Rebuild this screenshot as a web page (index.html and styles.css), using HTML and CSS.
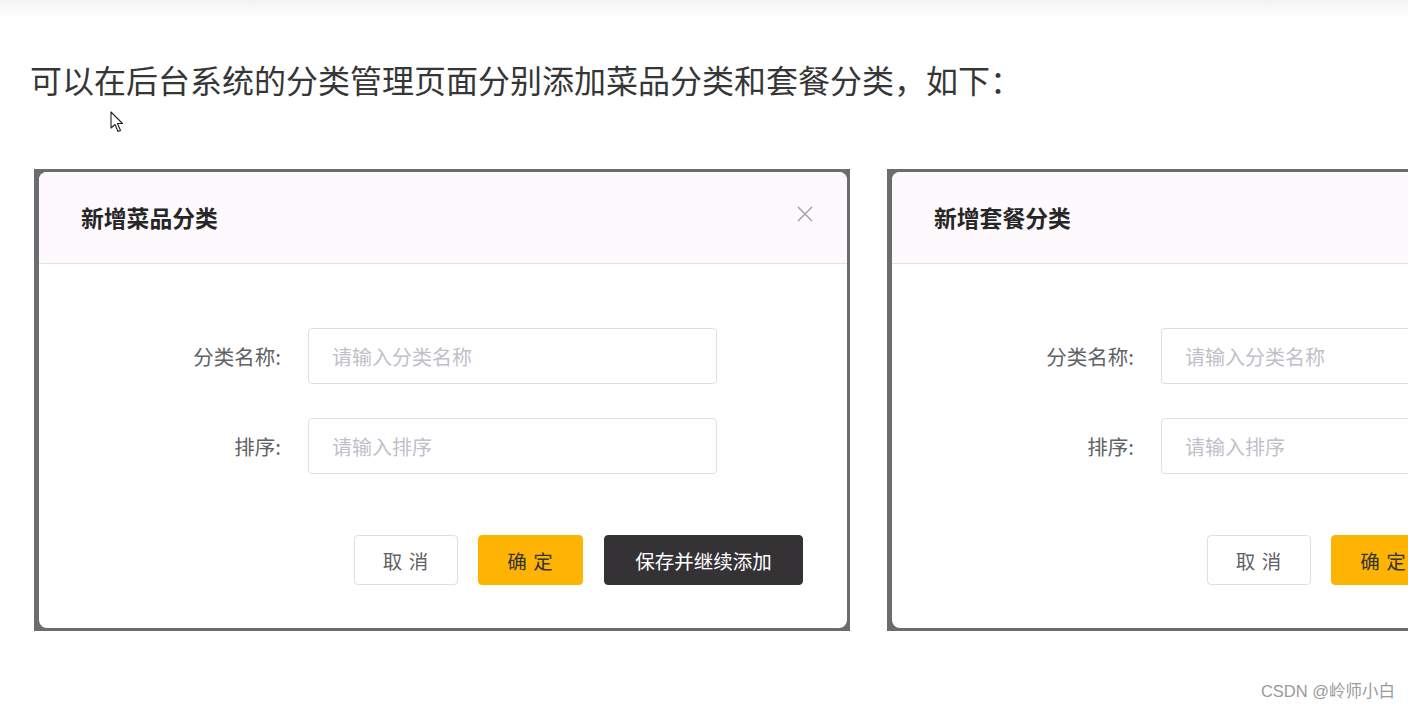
FILE: index.html
```html
<!DOCTYPE html>
<html lang="zh-CN">
<head>
<meta charset="utf-8">
<title>分类管理</title>
<link rel="stylesheet" href="styles.css">
</head>
<body>
<div class="page">
  <div class="topfade"></div>
  <p class="intro">可以在后台系统的分类管理页面分别添加菜品分类和套餐分类，如下：</p>
  <div class="shots">
    <div class="frame">
      <div class="dialog">
        <div class="dialog-header">
          <span class="dialog-title">新增菜品分类</span>
          <svg class="close" width="16" height="16" viewBox="0 0 16 16"><path d="M1 1L15 15M15 1L1 15" stroke="#9a9ca3" stroke-width="1.4" fill="none"/></svg>
        </div>
        <div class="dialog-body">
          <div class="form-row">
            <label class="form-label">分类名称:</label>
            <div class="input">请输入分类名称</div>
          </div>
          <div class="form-row form-row-last">
            <label class="form-label">排序:</label>
            <div class="input">请输入排序</div>
          </div>
          <div class="footer">
            <button class="btn btn-plain">取 消</button>
            <button class="btn btn-yellow">确 定</button>
            <button class="btn btn-dark">保存并继续添加</button>
          </div>
        </div>
      </div>
    </div>
    <div class="frame">
      <div class="dialog">
        <div class="dialog-header">
          <span class="dialog-title">新增套餐分类</span>
          <svg class="close" width="16" height="16" viewBox="0 0 16 16"><path d="M1 1L15 15M15 1L1 15" stroke="#9a9ca3" stroke-width="1.4" fill="none"/></svg>
        </div>
        <div class="dialog-body">
          <div class="form-row">
            <label class="form-label">分类名称:</label>
            <div class="input">请输入分类名称</div>
          </div>
          <div class="form-row form-row-last">
            <label class="form-label">排序:</label>
            <div class="input">请输入排序</div>
          </div>
          <div class="footer">
            <button class="btn btn-plain">取 消</button>
            <button class="btn btn-yellow">确 定</button>
            <button class="btn btn-dark">保存并继续添加</button>
          </div>
        </div>
      </div>
    </div>
  </div>
  <svg class="cursor" width="14" height="22" viewBox="0 0 14 22"><path d="M1 1L1 17L5 13.5L8 20.5L10.5 19.5L7.5 12.5L12.5 12.5Z" fill="#fff" stroke="#222" stroke-width="1.1" stroke-linejoin="round"/></svg>
  <div class="watermark">CSDN @岭师小白</div>
</div>
</body>
</html>
```
FILE: styles.css
```css
html, body {
  margin: 0;
  padding: 0;
  background: #ffffff;
}
body {
  width: 1408px;
  height: 709px;
  overflow: hidden;
  font-family: "Noto Sans CJK SC", "Noto Sans", "Liberation Sans", sans-serif;
}
.page {
  position: relative;
  width: 1408px;
  height: 709px;
  overflow: hidden;
}
.topfade {
  height: 18px;
  background: linear-gradient(#f3f3f4, #ffffff);
}
.intro {
  margin: 40px 0 0 30px;
  height: 43px;
  line-height: 43px;
  font-size: 32px;
  color: #363636;
  white-space: nowrap;
}
.shots {
  display: flex;
  gap: 37px;
  margin: 68px 0 0 34px;
}
.frame {
  flex-shrink: 0;
  background: #6c6c6e;
  padding: 3px 3px 3px 5px;
}
.dialog {
  width: 808px;
  height: 456px;
  background: #ffffff;
  border-radius: 8px;
  overflow: hidden;
  position: relative;
}
.dialog-header {
  height: 92px;
  background: #fdf9fd;
  border-bottom: 1px solid #e4e2e8;
  display: flex;
  align-items: center;
  padding: 0 0 0 42px;
  box-sizing: border-box;
}
.dialog-title {
  font-size: 22.8px;
  font-weight: 700;
  color: #262626;
}
.close {
  position: absolute;
  top: 34px;
  right: 34px;
}
.dialog-body {
  padding: 64px 44px 43px 0;
}
.form-row {
  display: flex;
  align-items: center;
  margin-bottom: 34px;
}
.form-row-last {
  margin-bottom: 61px;
}
.form-label {
  width: 269px;
  box-sizing: border-box;
  text-align: right;
  padding-right: 27px;
  font-size: 20.5px;
  color: #606266;
}
.input {
  width: 409px;
  height: 56px;
  box-sizing: border-box;
  border: 1px solid #dcdfe6;
  border-radius: 4px;
  padding-left: 23px;
  display: flex;
  align-items: center;
  font-size: 20px;
  color: #bfc0ca;
}
.footer {
  display: flex;
  justify-content: flex-end;
  gap: 20px;
}
.btn {
  height: 50px;
  border-radius: 4px;
  font-family: inherit;
  font-size: 19.5px;
  cursor: pointer;
  padding: 0;
  box-sizing: border-box;
}
.btn-plain {
  width: 104px;
  background: #ffffff;
  border: 1px solid #dcdfe6;
  color: #606266;
  letter-spacing: 1px;
}
.btn-yellow {
  width: 105px;
  background: #ffb302;
  border: 1px solid #ffb302;
  color: #333333;
  letter-spacing: 1px;
}
.btn-dark {
  width: 199px;
  margin-left: 1px;
  background: #353236;
  border: 1px solid #353236;
  color: #ffffff;
}
.cursor {
  position: absolute;
  left: 110px;
  top: 111px;
}
.watermark {
  position: absolute;
  right: 13px;
  top: 678px;
  font-size: 16.5px;
  color: #9a9a9a;
  font-family: "Liberation Sans", "Noto Sans CJK SC", sans-serif;
}
```
